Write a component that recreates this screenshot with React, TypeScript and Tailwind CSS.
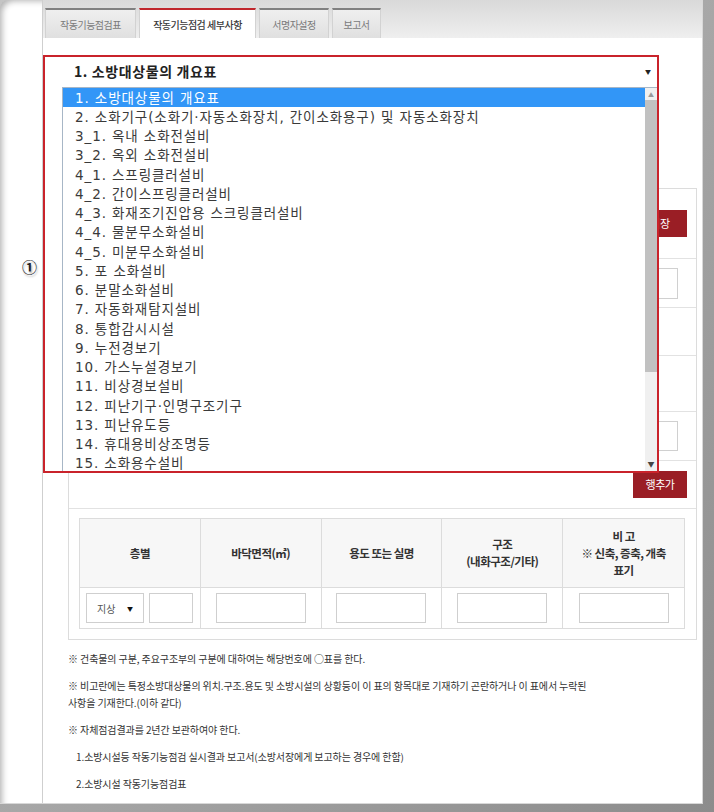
import React from "react";

const items = [
  "1. 소방대상물의 개요표",
  "2. 소화기구(소화기·자동소화장치, 간이소화용구) 및 자동소화장치",
  "3_1. 옥내 소화전설비",
  "3_2. 옥외 소화전설비",
  "4_1. 스프링클러설비",
  "4_2. 간이스프링클러설비",
  "4_3. 화재조기진압용 스크링클러설비",
  "4_4. 물분무소화설비",
  "4_5. 미분무소화설비",
  "5. 포 소화설비",
  "6. 분말소화설비",
  "7. 자동화재탐지설비",
  "8. 통합감시시설",
  "9. 누전경보기",
  "10. 가스누설경보기",
  "11. 비상경보설비",
  "12. 피난기구·인명구조기구",
  "13. 피난유도등",
  "14. 휴대용비상조명등",
  "15. 소화용수설비",
];

const tabBase =
  "h-[30px] shrink-0 flex items-center justify-center text-[10px] tracking-[-0.5px] border-t-2 border-x";
const tabOff =
  "border-t-[#808080] border-x-[#d2d2d2] bg-gradient-to-b from-[#efefef] to-[#e0e0e0] text-[#7a7a7a]";
const tabOn = "border-t-[#c0272d] border-x-[#d2d2d2] bg-white text-[#3a3a3a] font-medium";

function Input({ w }: { w: string }) {
  return <div className={`${w} h-[30px] border border-[#cfcfcf] bg-white`} />;
}

export default function App() {
  return (
    <div className="w-[714px] h-[812px] overflow-hidden bg-gradient-to-br from-[#c4c4c4] to-[#8c8c8c] font-['Noto_Sans_CJK_KR',sans-serif]">
      <div className="w-[703px] h-[804px] bg-white rounded-tl-[8px] border-r border-b border-[#d8d8d8] flex shadow-[inset_6px_5px_6px_-4px_rgba(0,0,0,0.3)]">
        {/* left column */}
        <div className="w-[43px] shrink-0 border-r border-[#cfcfcf] flex justify-end pr-[5px] pt-[257px]">
          <span className="h-fit text-[15px] font-bold text-[#222] leading-[20px] [text-shadow:1px_2px_2px_rgba(0,0,0,0.35)]">
            ①
          </span>
        </div>

        {/* content column */}
        <div className="flex-1 min-w-0 flex flex-col">
          {/* tabs */}
          <div className="h-[38px] shrink-0 bg-gradient-to-b from-[#d9d9d9] to-[#efefef] flex items-end pl-[2px] gap-[3px]">
            <div className={`${tabBase} ${tabOff} w-[91px]`}>작동기능점검표</div>
            <div className={`${tabBase} ${tabOn} w-[117px]`}>작동기능점검 세부사항</div>
            <div className={`${tabBase} ${tabOff} w-[70px]`}>서명자설정</div>
            <div className={`${tabBase} ${tabOff} w-[49px]`}>보고서</div>
          </div>

          {/* main */}
          <div className="relative flex-1 pt-[17px]">
            {/* space of the closed select (covered by the open list) */}
            <div className="ml-[19px] mr-[45px] h-[32px]" />

            {/* form panel */}
            <div className="mt-[101px] ml-[25px] mr-[5px] border border-[#dcdcdc] flex flex-col divide-y divide-[#e2e2e2]">
              <div className="h-[70px] flex items-center justify-end pr-[9px]">
                <div className="w-[54px] h-[27px] bg-[#9a1e25] text-white text-[11px] flex items-center justify-center">
                  저장
                </div>
              </div>
              <div className="h-[49px] flex items-center justify-end pr-[18px]">
                <div className="w-[120px] h-[31px] border border-[#d0d0d0]" />
              </div>
              <div className="h-[48px]" />
              <div className="h-[56px]" />
              <div className="h-[49px] flex items-center justify-end pr-[18px]">
                <div className="w-[120px] h-[30px] border border-[#d0d0d0]" />
              </div>
              <div className="h-[48px] flex items-center justify-end pr-[9px]">
                <div className="w-[54px] h-[27px] bg-[#9a1e25] text-white text-[11px] tracking-[-0.5px] flex items-center justify-center">
                  행추가
                </div>
              </div>
              <div className="h-[130px] pt-[9px] pl-[10px] pr-[11px]">
                <div className="border border-[#dcdcdc] grid grid-cols-5 text-[#333]">
                  {[
                    ["층별"],
                    ["바닥면적(㎡)"],
                    ["용도 또는 실명"],
                    ["구조", "(내화구조/기타)"],
                    ["비 고", "※ 신축, 증축, 개축", "표기"],
                  ].map((lines, i) => (
                    <div
                      key={i}
                      className={`h-[68px] bg-[#f7f7f7] flex flex-col items-center justify-center text-center text-[11.5px] font-semibold tracking-[-0.5px] leading-[17px] ${
                        i < 4 ? "border-r border-[#dcdcdc]" : ""
                      }`}
                    >
                      {lines.map((l, j) => (
                        <span key={j}>{l}</span>
                      ))}
                    </div>
                  ))}
                  <div className="h-[41px] border-t border-r border-[#dcdcdc] flex items-center pl-[6px] gap-[5px]">
                    <div className="w-[58px] h-[30px] border border-[#cfcfcf] flex items-center justify-between pl-[10px] pr-[10px]">
                      <span className="text-[10px] text-[#555]">지상</span>
                      <span className="text-[6px] text-[#111]">▼</span>
                    </div>
                    <Input w="w-[44px]" />
                  </div>
                  <div className="h-[41px] border-t border-r border-[#dcdcdc] flex items-center justify-center">
                    <Input w="w-[90px]" />
                  </div>
                  <div className="h-[41px] border-t border-r border-[#dcdcdc] flex items-center justify-center">
                    <Input w="w-[90px]" />
                  </div>
                  <div className="h-[41px] border-t border-r border-[#dcdcdc] flex items-center justify-center">
                    <Input w="w-[90px]" />
                  </div>
                  <div className="h-[41px] border-t border-[#dcdcdc] flex items-center justify-center">
                    <Input w="w-[90px]" />
                  </div>
                </div>
              </div>
            </div>

            {/* notes */}
            <div className="mt-[10px] ml-[25px] flex flex-col gap-[10px] text-[10px] tracking-[-0.1px] leading-[17px] text-[#333]">
              <p>※ 건축물의 구분, 주요구조부의 구분에 대하여는 해당번호에 ○표를 한다.</p>
              <p>
                ※ 비고란에는 특정소방대상물의 위치.구조.용도 및 소방시설의 상황등이 이 표의 항목대로 기재하기 곤란하거나 이 표에서 누락된
                <br />
                사항을 기재한다.(이하 같다)
              </p>
              <p>※ 자체점검결과를 2년간 보관하여야 한다.</p>
              <p className="pl-[8px]">1.소방시설등 작동기능점검 실시결과 보고서(소방서장에게 보고하는 경우에 한함)</p>
              <p className="pl-[8px]">2.소방시설 작동기능점검표</p>
            </div>

            {/* open dropdown overlay (annotated with red box) */}
            <div className="absolute left-0 top-[17px] w-[616px] h-[418px] border-2 border-[#c9232b] bg-white flex flex-col z-10">
              <div className="h-[30px] shrink-0 flex items-center justify-between pl-[29px] pr-[6px] pb-[2px]">
                <span className="text-[14px] font-bold text-[#222] tracking-[0.6px]">1. 소방대상물의 개요표</span>
                <span className="text-[6px] text-[#222]">▼</span>
              </div>
              <div className="ml-[17px] flex-1 min-h-0 flex border-l border-t border-[#a7b6c6] overflow-hidden">
                <div className="flex-1 min-w-0 overflow-hidden font-['DejaVu_Sans','Noto_Sans_CJK_KR',sans-serif]">
                  {items.map((t, i) => (
                    <div
                      key={i}
                      className={`h-[19.26px] flex items-center pl-[12px] text-[13.5px] tracking-[0.9px] whitespace-nowrap ${
                        i === 0 ? "bg-[#3296f7] text-white" : "text-[#3a3a3a]"
                      }`}
                    >
                      {t}
                    </div>
                  ))}
                </div>
                <div className="w-[12px] shrink-0 bg-[#f0f0f0] flex flex-col">
                  <div className="h-[12px] flex items-center justify-center text-[6px] text-[#999]">▲</div>
                  <div className="h-[272px] bg-[#c1c1c1]" />
                  <div className="flex-1" />
                  <div className="h-[14px] flex items-center justify-center text-[7px] text-[#444]">▼</div>
                </div>
              </div>
            </div>
          </div>
        </div>
      </div>
    </div>
  );
}
